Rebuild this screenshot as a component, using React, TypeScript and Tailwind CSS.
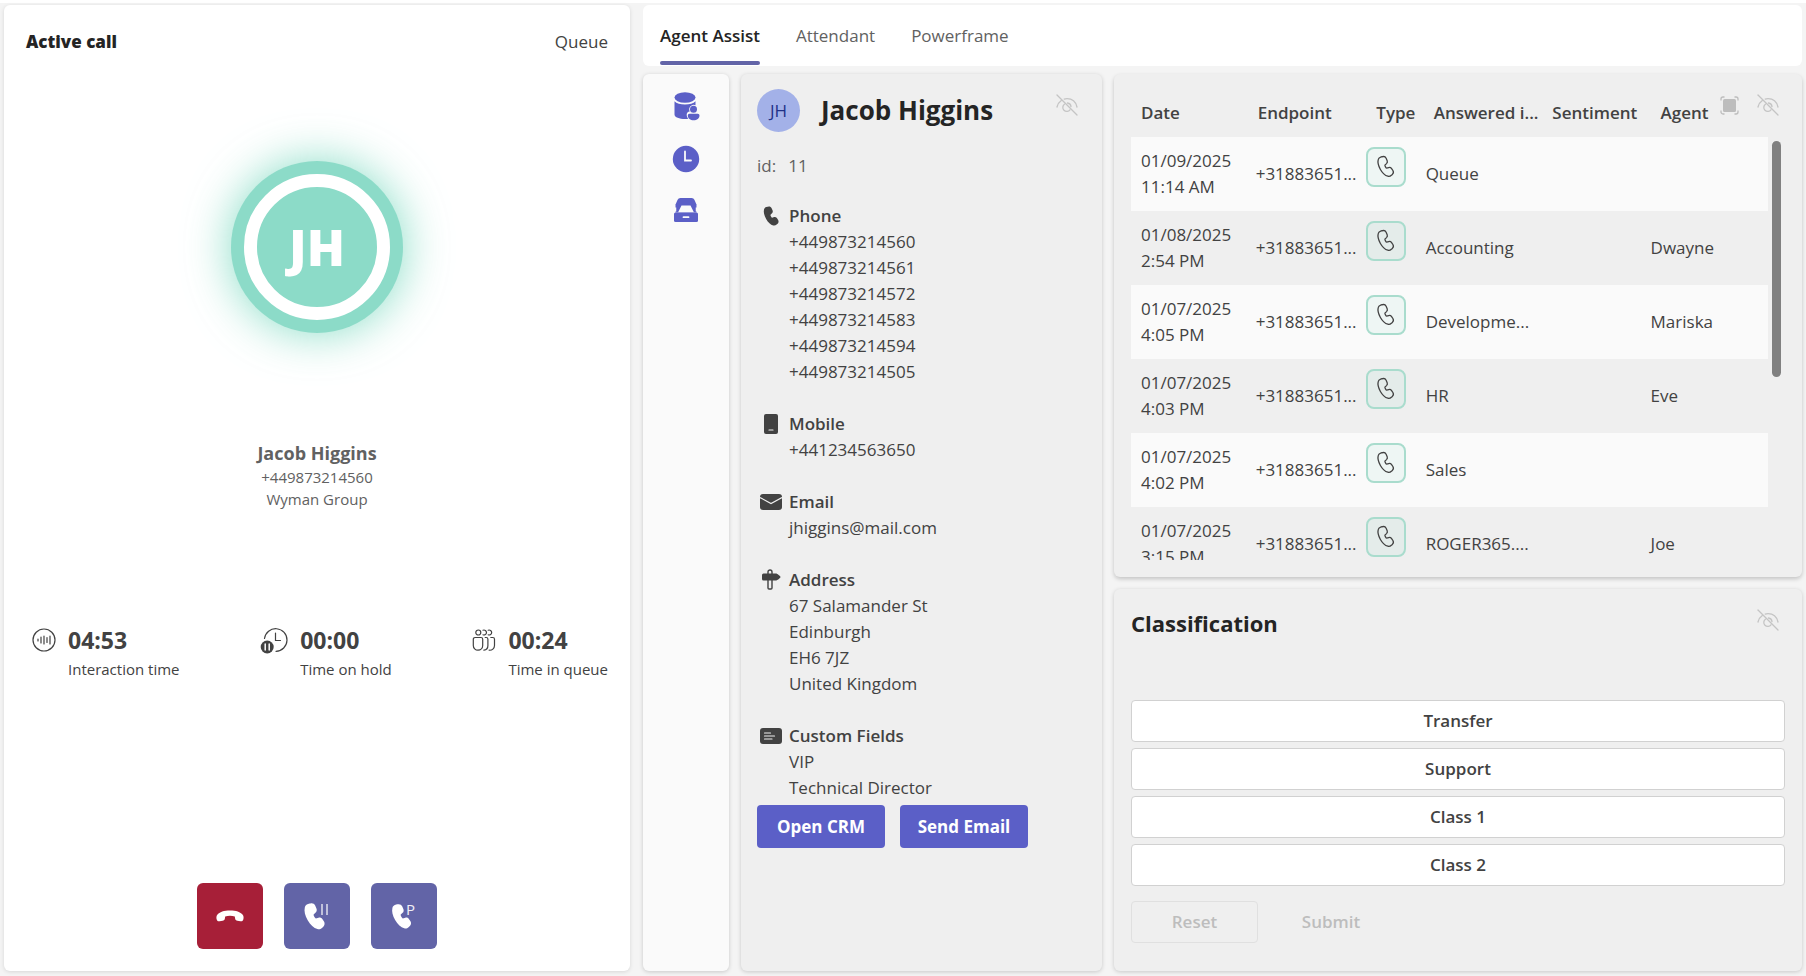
import type { ReactNode } from 'react'

const CALL_PATH =
    'M6.9 2.1 5.9 2.4C4.9 2.7 4.2 3.4 4 4.4c-.5 2.1.1 4.7 1.7 7.5s3.6 4.6 5.7 5.2c1 .3 2 0 2.7-.7l.8-.7c.8-.8 1-2 .4-3l-1-1.5c-.5-.7-1.4-1-2.2-.8l-1.6.5c-.1 0-.5-.3-.9-1s-.5-1.2-.4-1.4l1.2-1.1c.6-.6.8-1.5.5-2.3l-.8-1.8c-.5-1-1.7-1.6-2.8-1.2z'

const stats = [
    { value: '04:53', label: 'Interaction time', icon: <WaveIcon /> },
    { value: '00:00', label: 'Time on hold', icon: <HoldIcon /> },
    { value: '00:24', label: 'Time in queue', icon: <PeopleIcon /> },
]

const tabs = ['Agent Assist', 'Attendant', 'Powerframe']

const contact = [
    {
        title: 'Phone',
        icon: <CallIcon className="size-[25px]" />,
        lines: [
            '+449873214560',
            '+449873214561',
            '+449873214572',
            '+449873214583',
            '+449873214594',
            '+449873214505',
        ],
    },
    { title: 'Mobile', icon: <MobileIcon />, lines: ['+441234563650'] },
    { title: 'Email', icon: <MailIcon />, lines: ['jhiggins@mail.com'] },
    {
        title: 'Address',
        icon: <SignIcon />,
        lines: ['67 Salamander St', 'Edinburgh', 'EH6 7JZ', 'United Kingdom'],
    },
    { title: 'Custom Fields', icon: <FieldsIcon />, lines: ['VIP', 'Technical Director'] },
]

const calls = [
    { date: '01/09/2025', time: '11:14 AM', answered: 'Queue', agent: '' },
    { date: '01/08/2025', time: '2:54 PM', answered: 'Accounting', agent: 'Dwayne' },
    { date: '01/07/2025', time: '4:05 PM', answered: 'Developme...', agent: 'Mariska' },
    { date: '01/07/2025', time: '4:03 PM', answered: 'HR', agent: 'Eve' },
    { date: '01/07/2025', time: '4:02 PM', answered: 'Sales', agent: '' },
    { date: '01/07/2025', time: '3:15 PM', answered: 'ROGER365....', agent: 'Joe' },
]

const classes = ['Transfer', 'Support', 'Class 1', 'Class 2']

function CallIcon({ className }: { className?: string }) {
    return (
        <svg viewBox="0 0 20 20" fill="currentColor" className={className}>
            <path d={CALL_PATH} />
        </svg>
    )
}

function WaveIcon() {
    return (
        <svg viewBox="0 0 24 24" className="size-6" fill="none" stroke="currentColor" strokeWidth="1.2" strokeLinecap="round">
            <circle cx="12" cy="12" r="11" />
            <path d="M6 11v2M9 9v6M12 8v8M15 9.5v5M18 8v8" />
        </svg>
    )
}

function HoldIcon() {
    return (
        <svg viewBox="0 0 28 28" className="size-7" fill="none" stroke="currentColor" strokeWidth="1.2" strokeLinecap="round">
            <path d="M4.5 12.5a11.3 11.3 0 1 1 11.5 12.8" />
            <path d="M15.5 7v7.5h5" />
            <circle cx="7.2" cy="21" r="6.5" fill="currentColor" stroke="none" />
            <path d="M5.2 18v6M9.2 18v6" stroke="white" strokeWidth="1.5" />
        </svg>
    )
}

function PeopleIcon() {
    return (
        <svg viewBox="0 0 24 24" className="size-6" fill="none" stroke="currentColor" strokeWidth="1.2" strokeLinecap="round">
            <circle cx="6.3" cy="4.5" r="2.5" />
            <path d="M11 2.2a2.5 2.5 0 1 1 0 4.6M16.2 2.2a2.5 2.5 0 1 1 0 4.6" />
            <path d="M3 9.5h6a1.7 1.7 0 0 1 1.7 1.7v6.3a4.7 4.7 0 0 1-9.4 0v-6.3A1.7 1.7 0 0 1 3 9.5z" />
            <path d="M13.2 9.5h1a1.7 1.7 0 0 1 1.7 1.7v6.3a4.7 4.7 0 0 1-4 4.7M18.8 9.5h2a1.7 1.7 0 0 1 1.7 1.7v6.3a4.7 4.7 0 0 1-5.4 4.7" />
        </svg>
    )
}

function MobileIcon() {
    return (
        <svg viewBox="0 0 14 22" className="h-[22px] w-[14px]">
            <rect y="1" width="14" height="20" rx="2" fill="currentColor" />
            <path d="M5 17h4" stroke="#efefef" strokeWidth="1.2" strokeLinecap="round" />
        </svg>
    )
}

function MailIcon() {
    return (
        <svg viewBox="0 0 22 18" className="h-[18px] w-[22px]">
            <rect y="1" width="22" height="16" rx="3" fill="currentColor" />
            <path d="M0 4.5l11 6 11-6" fill="none" stroke="#efefef" strokeWidth="1.2" />
        </svg>
    )
}

function SignIcon() {
    return (
        <svg viewBox="0 0 20 22" className="h-[22px] w-5">
            <path d="M7 5V3a2 2 0 0 1 4 0v2M7 10v9a1 1 0 0 0 1 1h2a1 1 0 0 0 1-1v-9" fill="none" stroke="currentColor" strokeWidth="1.4" />
            <path d="M2.5 4.5H15c1 0 4.5 2.5 4.5 3.5S16 11.5 15 11.5H2.5A1.5 1.5 0 0 1 1 10V6a1.5 1.5 0 0 1 1.5-1.5z" fill="currentColor" />
        </svg>
    )
}

function FieldsIcon() {
    return (
        <svg viewBox="0 0 22 18" className="h-[18px] w-[22px]">
            <rect y="1" width="22" height="16" rx="3" fill="currentColor" />
            <path d="M4.5 6h6M4.5 9h10M4.5 12h7.5" stroke="#efefef" strokeWidth="1.2" strokeLinecap="round" />
        </svg>
    )
}

function EyeOffIcon() {
    return (
        <svg viewBox="0 0 22 22" className="size-[22px] text-[#c4c4c4]" fill="none" stroke="currentColor" strokeWidth="1.3" strokeLinecap="round">
            <path d="M1 1l20 20" />
            <path d="M1 13c.6-2.8 2.1-5 4.3-6.5M8.2 5.1c.9-.3 1.8-.4 2.8-.4 4.900 0 8.800 3.200 10 8.300" />
            <path d="M8.4 10.2a4 4 0 1 0 5.6 5.6M11.5 9a4 4 0 0 1 3.5 3.6" />
        </svg>
    )
}

function FullScreenIcon() {
    return (
        <svg viewBox="0 0 19 19" className="size-[19px] text-[#bdbdbd]">
            <rect x="3" y="3" width="13" height="13" rx="1.5" fill="currentColor" />
            <path d="M1 4.5V3a2 2 0 0 1 2-2h1.5M14.5 1H16a2 2 0 0 1 2 2v1.5M18 14.5V16a2 2 0 0 1-2 2h-1.5M4.500 18H3a2 2 0 0 1-2-2v-1.5" fill="none" stroke="currentColor" strokeWidth="1.3" />
        </svg>
    )
}

function DatabasePersonIcon() {
    return (
        <svg viewBox="0 0 28 30" className="h-[30px] w-7" fill="currentColor">
            <ellipse cx="13" cy="6.5" rx="10.5" ry="5.2" />
            <path d="M2.5 10.2c2 2.2 6 3.2 10.5 3.2s8.5-1 10.5-3.2v4a4.6 4.6 0 0 0-5.8 6.3c-1.9.2-3 1.5-3 3.2 0 1.7.6 3.1 1.8 4.1-6.5.9-14-.8-14-4.3z" />
            <circle cx="21.5" cy="18.3" r="3.5" />
            <path d="M17.500 22.7h8.3a1.7 1.7 0 0 1 1.7 1.7c0 3-2.5 4.8-5.8 4.8s-5.9-1.8-5.9-4.800a1.7 1.7 0 0 1 1.7-1.700z" />
        </svg>
    )
}

function ClockIcon() {
    return (
        <svg viewBox="0 0 28 28" className="size-7">
            <circle cx="14" cy="14" r="13.2" fill="currentColor" />
            <path d="M13 6.5v9h6" fill="none" stroke="#fafafa" strokeWidth="1.8" strokeLinecap="round" />
        </svg>
    )
}

function DrawerIcon() {
    return (
        <svg viewBox="0 0 26 26" className="size-[26px]">
            <path d="M7.5 1h11c1.500 0 2.400.7 3 2l2 4.500V15.500h-21V7.500l2-4.500c.6-1.300 1.500-2 3-2z" fill="currentColor" />
            <path d="M8.500 8.500h9l3.500 7H5z" fill="#fafafa" />
            <path d="M2 10.500v4M24 10.500v4" stroke="#fafafa" strokeWidth="2.500" />
            <rect x="1" y="15.500" width="24" height="9.500" rx="1.500" fill="currentColor" />
            <path d="M10.500 20.200h5" stroke="#fafafa" strokeWidth="1.800" strokeLinecap="round" />
        </svg>
    )
}

function ActionButton({ label, className, children }: { label: string; className: string; children: ReactNode }) {
    return (
        <button aria-label={label} className={`flex size-[66px] items-center justify-center rounded-md text-white ${className}`}>
            {children}
        </button>
    )
}

function ActiveCall() {
    return (
        <section className="flex flex-col rounded-md bg-white shadow-[0_1px_4px_rgba(0,0,0,0.12)]">
            <header className="flex items-center justify-between px-[22px] pt-6 leading-[26px]">
                <h1 className="font-extrabold text-[#242424]">Active call</h1>
                <span>Queue</span>
            </header>

            <div className="mx-auto mt-[106px] flex size-[172px] items-center justify-center rounded-full bg-[#8cdbc8] shadow-[0_0_46px_rgba(93,208,178,0.75)]">
                <div className="flex size-[146px] items-center justify-center rounded-full border-[13px] border-white text-[50px] font-extrabold text-white">
                    JH
                </div>
            </div>

            <div className="mt-[107px] text-center text-[#616161]">
                <p className="text-lg leading-[26px] font-bold">Jacob Higgins</p>
                <p className="text-[15px] leading-[22px] font-medium">+449873214560</p>
                <p className="text-[15px] leading-[22px] font-medium">Wyman Group</p>
            </div>

            <div className="mt-[114px] flex justify-between px-[22px] pl-7">
                {stats.map((s) => (
                    <div key={s.label} className="flex gap-3">
                        <div className="flex h-8 items-center">{s.icon}</div>
                        <div>
                            <p className="text-[23px] leading-8 font-bold">{s.value}</p>
                            <p className="text-[15px] leading-[26px]">{s.label}</p>
                        </div>
                    </div>
                ))}
            </div>

            <div className="mt-auto flex justify-center gap-[21px] pb-[22px]">
                <ActionButton label="Hang up" className="bg-[#a71f38]">
                    <svg viewBox="0 0 28 12" className="h-3 w-7" fill="currentColor">
                        <path d="M14 .5C8 .5 3.5 2 1.3 4.7.3 6 .2 7.8.7 9.5c.4 1.4 1.5 2 2.9 1.8l3-.5c1.3-.3 2.1-1.1 2.3-2.4l.3-1.8c3-1 6.6-1 9.6 0l.3 1.8c.2 1.3 1 2.1 2.3 2.4l3 .5c1.4.2 2.5-.4 2.9-1.8.5-1.7.4-3.5-.6-4.8C24.5 2 20 .5 14 .5z" />
                    </svg>
                </ActionButton>
                <ActionButton label="Hold" className="bg-[#6264a7]">
                    <svg viewBox="0 0 28 32" className="h-8 w-7" fill="currentColor">
                        <path d={CALL_PATH} transform="translate(-5 0) scale(1.7)" />
                        <path d="M19 4v11M24 4v11" stroke="currentColor" strokeWidth="1.5" opacity="0.8" />
                    </svg>
                </ActionButton>
                <ActionButton label="Park" className="bg-[#6264a7]">
                    <svg viewBox="0 0 28 32" className="h-8 w-7" fill="currentColor">
                        <path d={CALL_PATH} transform="translate(-4 1) scale(1.6)" />
                        <text x="16" y="15" fontSize="15" opacity="0.9">P</text>
                    </svg>
                </ActionButton>
            </div>
        </section>
    )
}

function ContactCard() {
    return (
        <section className="rounded-md bg-[#efefef] px-4 pt-[15px] shadow-[0_1px_4px_rgba(0,0,0,0.18)]">
            <div className="flex items-center">
                <div className="flex size-[43px] items-center justify-center rounded-full bg-[#a3b1e8] text-[17px] font-medium text-[#1f3188]">
                    JH
                </div>
                <h2 className="ml-[21px] flex-1 text-[26px] leading-[43px] font-bold text-[#242424]">Jacob Higgins</h2>
                <button aria-label="Hide contact" className="mr-2 self-start pt-[5px]">
                    <EyeOffIcon />
                </button>
            </div>

            <p className="mt-[21px] flex gap-3 leading-[26px] text-[#616161]">
                <span className="font-medium">id:</span>
                <span>11</span>
            </p>

            <div className="mt-6 flex flex-col gap-[26px] leading-[26px]">
                {contact.map((c) => (
                    <div key={c.title} className="flex">
                        <div className="mr-1 flex h-[26px] w-7 items-center justify-center">{c.icon}</div>
                        <div>
                            <h3 className="font-semibold">{c.title}</h3>
                            {c.lines.map((line) => (
                                <p key={line}>{line}</p>
                            ))}
                        </div>
                    </div>
                ))}
            </div>

            <div className="mt-1 flex gap-[15px]">
                <button className="h-[43px] w-32 rounded bg-[#5b5fc7] font-bold whitespace-nowrap text-white">Open CRM</button>
                <button className="h-[43px] w-32 rounded bg-[#5b5fc7] font-bold whitespace-nowrap text-white">Send Email</button>
            </div>
        </section>
    )
}

function CallHistory() {
    return (
        <section className="relative h-[503px] rounded-md bg-[#efefef] px-[17px] pt-[15px] pb-[17px] shadow-[0_2px_4px_rgba(0,0,0,0.2)]">
            <div className="absolute top-5 right-[23px] flex gap-[18px]">
                <button aria-label="Full screen"><FullScreenIcon /></button>
                <button aria-label="Hide call history"><EyeOffIcon /></button>
            </div>

            <div className="flex h-full gap-1">
                <div className="flex-1 overflow-hidden">
                    <table className="w-full table-fixed text-left leading-[26px] whitespace-nowrap">
                        <thead>
                            <tr className="h-12">
                                <th className="w-[18%] pl-[10px] font-semibold">Date</th>
                                <th className="w-[18%] pl-3 font-semibold">Endpoint</th>
                                <th className="w-[9%] pl-4 font-semibold">Type</th>
                                <th className="w-[18%] pl-4 font-semibold">Answered i...</th>
                                <th className="w-[17%] pl-5 font-semibold">Sentiment</th>
                                <th className="w-[20%] pl-5 font-semibold">Agent</th>
                            </tr>
                        </thead>
                        <tbody>
                            {calls.map((c) => (
                                <tr key={c.date + c.time} className="h-[74px] odd:bg-[#fafafa]">
                                    <td className="pl-[10px]">
                                        {c.date}
                                        <br />
                                        {c.time}
                                    </td>
                                    <td className="pl-[10px]">+31883651...</td>
                                    <td className="pt-[10px] pl-[6px] align-top">
                                        <span className="flex size-10 items-center justify-center rounded-lg border-2 border-[#a9dccd] bg-[#8cdbc8]/10">
                                            <svg viewBox="0 0 20 20" className="size-[26px]" fill="none" stroke="currentColor">
                                                <path d={CALL_PATH} />
                                            </svg>
                                        </span>
                                    </td>
                                    <td className="pl-2">{c.answered}</td>
                                    <td />
                                    <td className="pl-[10px]">{c.agent}</td>
                                </tr>
                            ))}
                        </tbody>
                    </table>
                </div>
                <div className="mt-[52px] mr-1 h-[236px] w-[9px] rounded-full bg-[#808080]" />
            </div>
        </section>
    )
}

function Classification() {
    return (
        <section className="flex-1 rounded-md bg-[#efefef] px-[17px] pt-[18px] pb-[26px] shadow-[0_1px_4px_rgba(0,0,0,0.18)]">
            <div className="flex items-start justify-between">
                <h2 className="text-[22px] leading-8 font-bold text-[#242424]">Classification</h2>
                <button aria-label="Hide classification" className="mt-[2px] mr-[6px]">
                    <EyeOffIcon />
                </button>
            </div>
            <div className="mt-[61px] flex flex-col gap-[6px]">
                {classes.map((name) => (
                    <button key={name} className="h-[42px] rounded border border-[#d1d1d1] bg-white font-semibold">
                        {name}
                    </button>
                ))}
            </div>
            <div className="mt-[15px] flex gap-5">
                <button disabled className="h-[42px] w-[127px] rounded border border-[#e0e0e0] font-semibold text-[#bdbdbd]">Reset</button>
                <button disabled className="h-[42px] w-[106px] font-semibold text-[#bdbdbd]">Submit</button>
            </div>
        </section>
    )
}

export default function App() {
    return (
        <div className="grid min-h-screen grid-cols-[626fr_1159fr] gap-[13px] border-t-[3px] border-white bg-[#f4f4f4] px-1 pt-[2px] pb-[5px] font-['Open_Sans','Noto_Sans',sans-serif] text-[17px] text-[#424242]">
            <ActiveCall />

            <div className="flex flex-col gap-2">
                <nav className="flex h-[61px] gap-9 rounded-md bg-white px-[17px]">
                    {tabs.map((tab, i) => (
                        <button
                            key={tab}
                            className={
                                i === 0
                                    ? 'flex flex-col justify-between pt-[18px] pb-px font-semibold text-[#242424]'
                                    : 'flex flex-col justify-between pt-[18px] pb-px text-[#616161]'
                            }
                        >
                            <span className="leading-[26px]">{tab}</span>
                            {i === 0 && <span className="h-1 w-full rounded-full bg-[#6264a7]" />}
                        </button>
                    ))}
                </nav>

                <div className="grid flex-1 grid-cols-[86px_361fr_688fr] gap-3">
                    <aside className="flex flex-col items-center gap-6 rounded-md bg-[#fafafa] pt-[17px] text-[#5b5fc7] shadow-[0_1px_4px_rgba(0,0,0,0.18)]">
                        <button aria-label="Contact data"><DatabasePersonIcon /></button>
                        <button aria-label="History"><ClockIcon /></button>
                        <button aria-label="Archive"><DrawerIcon /></button>
                    </aside>
                    <ContactCard />
                    <div className="flex flex-col gap-3">
                        <CallHistory />
                        <Classification />
                    </div>
                </div>
            </div>
        </div>
    )
}
